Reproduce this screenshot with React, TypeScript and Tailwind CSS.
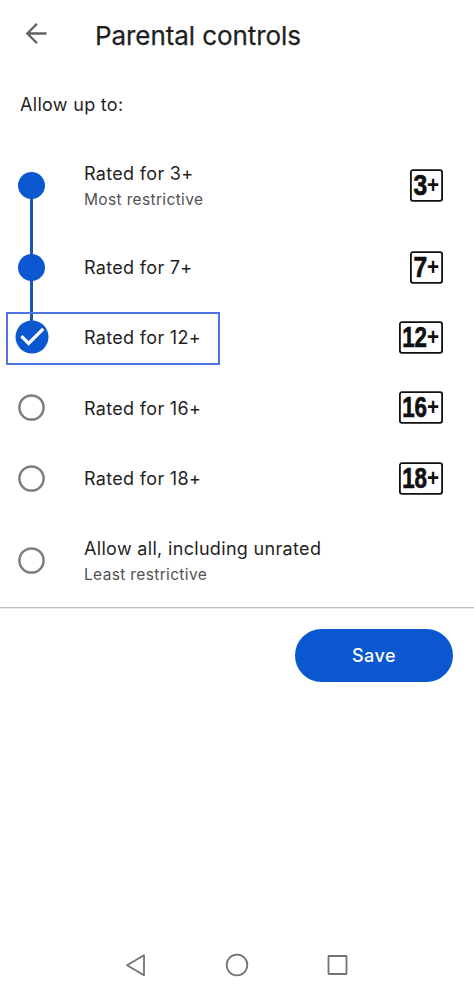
type Rating = {
  title: string;
  note?: string;
  badge?: string;
  state: "filled" | "selected" | "empty";
  above?: boolean;
  below?: boolean;
};

const ratings: Rating[] = [
  { title: "Rated for 3+", note: "Most restrictive", badge: "3", state: "filled", below: true },
  { title: "Rated for 7+", badge: "7", state: "filled", above: true, below: true },
  { title: "Rated for 12+", badge: "12", state: "selected", above: true },
  { title: "Rated for 16+", badge: "16", state: "empty" },
  { title: "Rated for 18+", badge: "18", state: "empty" },
  { title: "Allow all, including unrated", note: "Least restrictive", state: "empty" },
];

function Marker({ state }: { state: Rating["state"] }) {
  if (state === "selected") {
    return (
      <svg className="relative size-[34px] shrink-0" viewBox="0 0 34 34" fill="none">
        <circle cx="17" cy="17" r="16.5" fill="#0b57d0" />
        <path d="M6.4 16.2l7.2 7.2L28.2 8.8" stroke="#fff" strokeWidth="3.3" />
      </svg>
    );
  }
  return state === "filled" ? (
    <span className="relative size-[27px] shrink-0 rounded-full bg-[#0b57d0]" />
  ) : (
    <svg className="size-[27px] shrink-0" viewBox="0 0 27 27" fill="none">
      <circle cx="13.5" cy="13.5" r="12.1" stroke="#7c7e80" strokeWidth="2.5" />
    </svg>
  );
}

function Badge({ value }: { value: string }) {
  const wide = value.length > 1;
  const w = wide ? 44 : 33;
  return (
    <svg width={w} height="33" viewBox={`0 0 ${w} 33`} className="shrink-0 font-['Liberation_Sans',Arial,sans-serif] font-bold">
      <rect x="0.9" y="1.2" width={w - 1.8} height="30.6" rx="2" fill="#fff" stroke="#111" strokeWidth="1.8" />
      <text transform={`translate(${wide ? 3.2 : 3.4} 26.3) scale(${wide ? 0.77 : 0.85} 1)`} fontSize="29" letterSpacing={wide ? "-0.3" : "0"} fill="#111" stroke="#111" strokeWidth="0.7">
        {value}
      </text>
      <text transform={`translate(${w - 16} 24) scale(0.88 1)`} fontSize="23.5" fill="#111">
        +
      </text>
    </svg>
  );
}

function RatingRow({ item }: { item: Rating }) {
  return (
    <div className={`relative flex items-center pr-[31px] pl-[14px] ${item.note ? "h-[94px]" : "h-[70.3px]"}`}>
      {item.above && <span className="absolute top-0 left-[30px] h-1/2 w-[3px] bg-[#1b55b5]" />}
      {item.below && <span className="absolute bottom-0 left-[30px] h-1/2 w-[3px] bg-[#1b55b5]" />}
      {item.state === "selected" && (
        <span className="absolute top-[10px] left-[6px] h-[53px] w-[214px] border-2 border-[#4f74e3]" />
      )}
      <div className="flex w-[35px] shrink-0 justify-center">
        <Marker state={item.state} />
      </div>
      <div className={`ml-[35px] flex-1 ${item.note ? "pt-[3px]" : "pt-[2px]"}`}>
        <div className="text-[18px] leading-[26px] tracking-[0.32px] whitespace-nowrap text-[#1f1f1f]">{item.title}</div>
        {item.note && (
          <div className="text-[15.5px] leading-[26px] tracking-[0.35px] whitespace-nowrap text-[#505254]">{item.note}</div>
        )}
      </div>
      {item.badge && <Badge value={item.badge} />}
    </div>
  );
}

export default function App() {
  return (
    <div className="flex h-[991px] w-[474px] flex-col overflow-hidden bg-white font-['Inter','Noto_Sans',sans-serif]">
      <header className="flex h-[70px] shrink-0 items-center pl-[26px]">
        <svg className="-mt-[3px] size-[21px] shrink-0" viewBox="0 0 21 21" fill="none" stroke="#5f6163" strokeWidth="2.3">
          <path d="M20.5 10.5H1.5M11 .8L1.3 10.5 11 20.2" />
        </svg>
        <h1 className="ml-[48px] pt-[1px] text-[26px] leading-9 tracking-[-0.08px] text-[#1f1f1f] [-webkit-text-stroke:0.25px_#1f1f1f]">Parental controls</h1>
      </header>
      <p className="mt-[22px] ml-5 h-[26px] shrink-0 text-[18px] leading-[26px] tracking-[0.3px] text-[#1f1f1f]">Allow up to:</p>
      <main className="mt-[20px] h-[470px] shrink-0 border-b border-[#bfc0c1] shadow-[0_1px_0_#ebebeb]">
        {ratings.map((item) => (
          <RatingRow key={item.title} item={item} />
        ))}
      </main>
      <div className="mt-[21px] flex justify-end pr-[21px]">
        <button className="h-[53px] w-[158px] rounded-full bg-[#0b57d0] pb-px text-[18px] font-medium tracking-[0.5px] text-white">Save</button>
      </div>
      <nav className="mt-auto flex h-[52px] items-center pl-[125px]">
        <svg width="224" height="24" viewBox="0 0 224 24" fill="none" stroke="#737373" strokeWidth="1.8" strokeLinejoin="round">
          <path d="M19 2.2V22.2L2 12.2z" />
          <circle cx="112" cy="12" r="10.3" />
          <rect x="203.5" y="3" width="18" height="18" rx="0.5" />
        </svg>
      </nav>
    </div>
  );
}
